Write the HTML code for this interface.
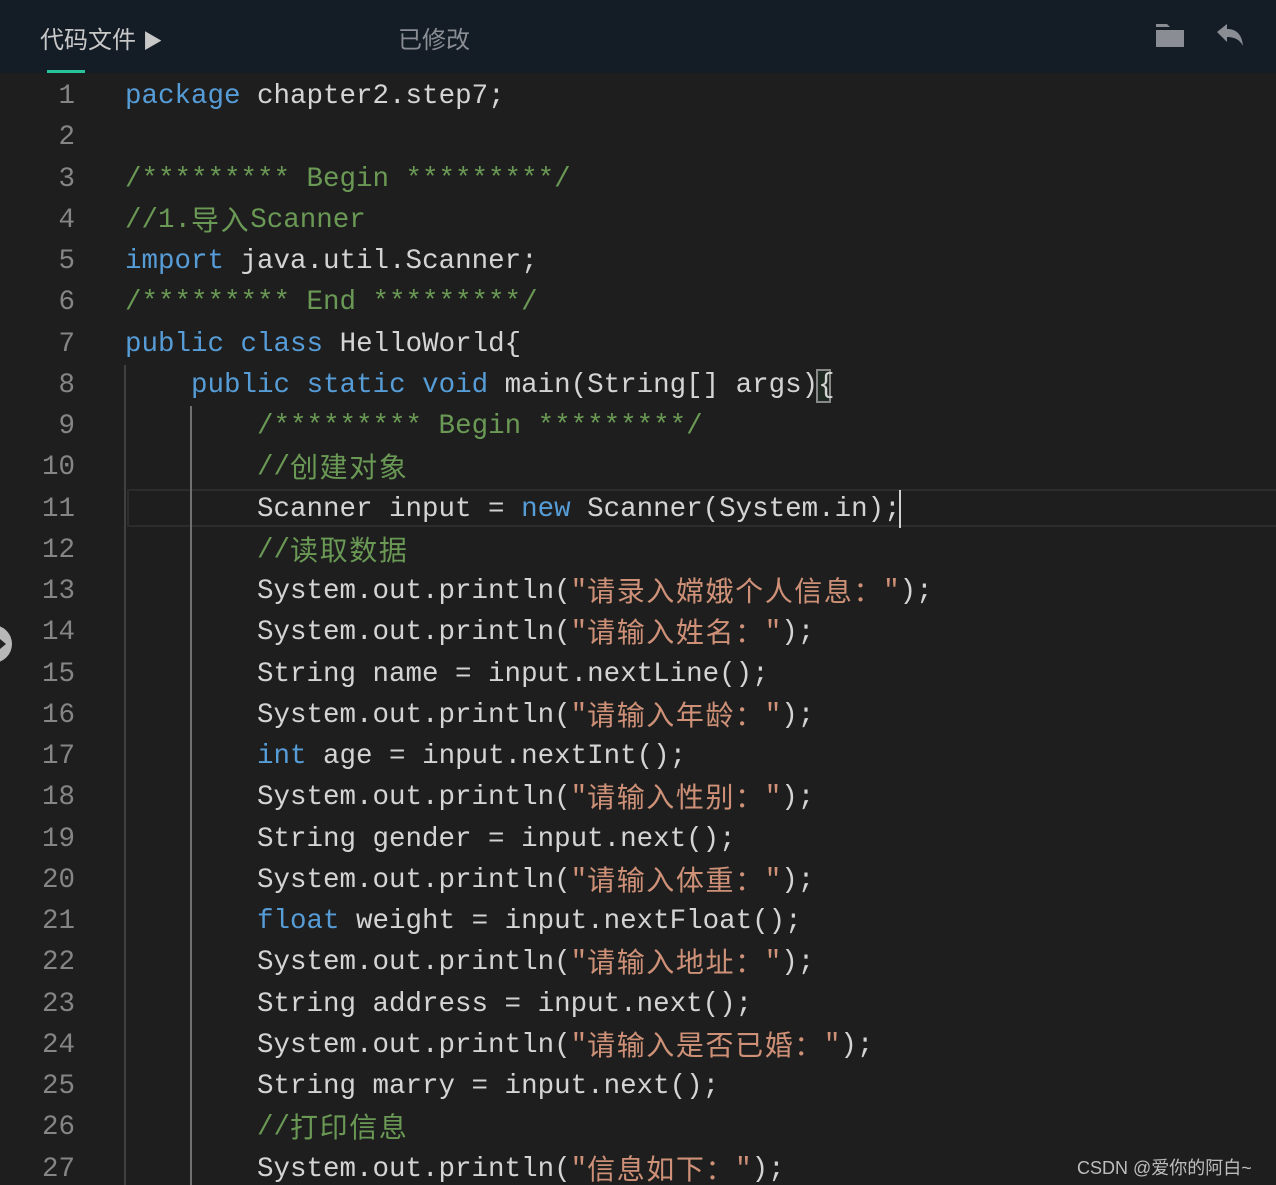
<!DOCTYPE html>
<html><head><meta charset="utf-8"><style>
html,body{margin:0;width:1276px;height:1185px;overflow:hidden;}
body{background:#1e1e1e;position:relative;font-family:"Liberation Mono","Noto Sans CJK SC",monospace;}
.hdr{position:absolute;left:0;top:0;width:1276px;height:73px;background:#141c26;}
.hdr .t{position:absolute;top:20px;font-family:"Liberation Sans","Noto Sans CJK SC",sans-serif;font-size:24px;color:#c8c8c8;}
.tab{position:absolute;left:47px;top:70px;width:38px;height:3px;background:#27c39a;}
.ln{position:absolute;left:0;width:75px;text-align:right;font-size:27.5px;color:#858585;height:41.25px;line-height:41.25px;}
.cl{position:absolute;left:125px;font-size:27.5px;color:#d4d4d4;height:41.25px;line-height:41.25px;white-space:pre;}
.k{color:#569cd6}.c{color:#6a9955}.s{color:#ce9178}
.z{font-family:"Noto Sans CJK SC",sans-serif;font-size:28px;line-height:1;letter-spacing:1.6px;display:inline-block;vertical-align:-3px;}
.g{position:absolute;width:2px;}
</style></head><body>
<div class="hdr">
<div class="t" style="left:40px">代码文件 <span style="font-size:20px">▶</span></div>
<div class="t" style="left:398px;color:#8a8e94">已修改</div>
<svg style="position:absolute;left:1155px;top:22px" width="30" height="26" viewBox="0 0 30 26"><path d="M1 2h11l3 3H1z M1 8h28v17H1z" fill="#8a8e94"/></svg>
<svg style="position:absolute;left:1216px;top:23px" width="28" height="24" viewBox="0 0 28 24"><path d="M1 9L11 1v5c9 0 15 5 16 17c-3-6-8-9-16-9v5z" fill="#8a8e94"/></svg>
</div>
<div class="tab"></div>
<div style="position:absolute;left:127px;top:489px;width:1149px;height:38px;border:2px solid #2c2c2c;border-right:none;box-sizing:border-box"></div>
<div class="g" style="left:124px;top:365px;height:820px;background:#404040"></div>
<div class="g" style="left:190px;top:406px;height:779px;background:#707070"></div>
<div style="position:absolute;left:899px;top:490px;width:2px;height:38px;background:#d0d0d0"></div>
<div style="position:absolute;left:816px;top:369px;width:15px;height:34px;border:2px solid #888;box-sizing:border-box;background:#1f2b22"></div>
<div style="position:absolute;left:-26px;top:625px;width:38px;height:38px;border-radius:50%;background:#b8b8b8"></div>
<div style="position:absolute;left:0;top:639px;width:0;height:0;border-top:5px solid transparent;border-bottom:5px solid transparent;border-left:6px solid #222"></div>
<div style="position:absolute;left:1077px;top:1154px;font-family:'Liberation Sans','Noto Sans CJK SC',sans-serif;font-size:18px;color:#bdbdbd">CSDN @爱你的阿白~</div>
<div id="code"></div>
<script>
var L=[
'<span class="k">package</span> chapter2.step7;',
'',
'<span class="c">/********* Begin *********/</span>',
'<span class="c">//1.<span class="z">导入</span>Scanner</span>',
'<span class="k">import</span> java.util.Scanner;',
'<span class="c">/********* End *********/</span>',
'<span class="k">public</span> <span class="k">class</span> HelloWorld{',
'    <span class="k">public</span> <span class="k">static</span> <span class="k">void</span> main(String[] args){',
'        <span class="c">/********* Begin *********/</span>',
'        <span class="c">//<span class="z">创建对象</span></span>',
'        Scanner input = <span class="k">new</span> Scanner(System.in);',
'        <span class="c">//<span class="z">读取数据</span></span>',
'        System.out.println(<span class="s">"<span class="z">请录入嫦娥个人信息：</span>"</span>);',
'        System.out.println(<span class="s">"<span class="z">请输入姓名：</span>"</span>);',
'        String name = input.nextLine();',
'        System.out.println(<span class="s">"<span class="z">请输入年龄：</span>"</span>);',
'        <span class="k">int</span> age = input.nextInt();',
'        System.out.println(<span class="s">"<span class="z">请输入性别：</span>"</span>);',
'        String gender = input.next();',
'        System.out.println(<span class="s">"<span class="z">请输入体重：</span>"</span>);',
'        <span class="k">float</span> weight = input.nextFloat();',
'        System.out.println(<span class="s">"<span class="z">请输入地址：</span>"</span>);',
'        String address = input.next();',
'        System.out.println(<span class="s">"<span class="z">请输入是否已婚：</span>"</span>);',
'        String marry = input.next();',
'        <span class="c">//<span class="z">打印信息</span></span>',
'        System.out.println(<span class="s">"<span class="z">信息如下：</span>"</span>);'
];
var h='';
for(var i=0;i<L.length;i++){var t=76+i*41.25;
h+='<div class="ln" style="top:'+t+'px">'+(i+1)+'</div><div class="cl" style="top:'+t+'px">'+L[i]+'</div>';}
document.getElementById('code').innerHTML=h;
</script>
</body></html>
